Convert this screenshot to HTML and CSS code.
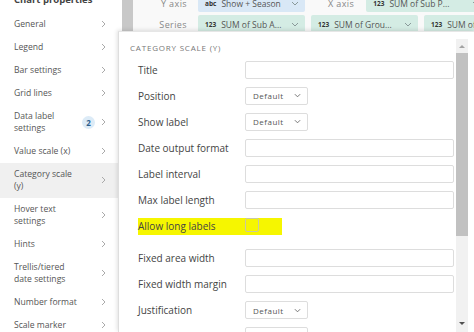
FILE: index.html
```html
<!DOCTYPE html>
<html lang="en">
<head>
    <meta charset="UTF-8">
    <meta name="viewport" content="width=device-width, initial-scale=1.0">
    <title>Chart properties</title>
    <link rel="stylesheet" href="styles.css">
</head>
<body>
    <div class="app">
        <aside class="sidebar">
            <div class="sidebar-title">Chart properties</div>
            <nav class="nav">
                <a class="nav-item"><span class="nav-label">General</span><span class="nav-end"><svg class="chev" viewBox="0 0 5 8"><polyline points="1,1 4,4 1,7"/></svg></span></a>
                <a class="nav-item"><span class="nav-label">Legend</span><span class="nav-end"><svg class="chev" viewBox="0 0 5 8"><polyline points="1,1 4,4 1,7"/></svg></span></a>
                <a class="nav-item"><span class="nav-label">Bar settings</span><span class="nav-end"><svg class="chev" viewBox="0 0 5 8"><polyline points="1,1 4,4 1,7"/></svg></span></a>
                <a class="nav-item"><span class="nav-label">Grid lines</span><span class="nav-end"><svg class="chev" viewBox="0 0 5 8"><polyline points="1,1 4,4 1,7"/></svg></span></a>
                <a class="nav-item"><span class="nav-label">Data label settings</span><span class="nav-end"><span class="badge">2</span><svg class="chev" viewBox="0 0 5 8"><polyline points="1,1 4,4 1,7"/></svg></span></a>
                <a class="nav-item"><span class="nav-label">Value scale (x)</span><span class="nav-end"><svg class="chev" viewBox="0 0 5 8"><polyline points="1,1 4,4 1,7"/></svg></span></a>
                <a class="nav-item active"><span class="nav-label">Category scale (y)</span><span class="nav-end"><svg class="chev" viewBox="0 0 5 8"><polyline points="1,1 4,4 1,7"/></svg></span></a>
                <a class="nav-item"><span class="nav-label">Hover text settings</span><span class="nav-end"><svg class="chev" viewBox="0 0 5 8"><polyline points="1,1 4,4 1,7"/></svg></span></a>
                <a class="nav-item"><span class="nav-label">Hints</span><span class="nav-end"><svg class="chev" viewBox="0 0 5 8"><polyline points="1,1 4,4 1,7"/></svg></span></a>
                <a class="nav-item"><span class="nav-label">Trellis/tiered date settings</span><span class="nav-end"><svg class="chev" viewBox="0 0 5 8"><polyline points="1,1 4,4 1,7"/></svg></span></a>
                <a class="nav-item"><span class="nav-label">Number format</span><span class="nav-end"><svg class="chev" viewBox="0 0 5 8"><polyline points="1,1 4,4 1,7"/></svg></span></a>
                <a class="nav-item"><span class="nav-label">Scale marker</span><span class="nav-end"><svg class="chev" viewBox="0 0 5 8"><polyline points="1,1 4,4 1,7"/></svg></span></a>
            </nav>
        </aside>

        <div class="gutter"></div>

        <main class="workspace">
            <div class="shelf">
                <div class="shelf-row">
                    <span class="shelf-label">Y axis</span>
                    <span class="chip chip-text"><span class="chip-type">abc</span>Show + Season<svg class="chip-chev" viewBox="0 0 8 5"><polyline points="1,1 4,4 7,1"/></svg></span>
                    <span class="shelf-label shelf-label-inline">X axis</span>
                    <span class="chip chip-wide"><span class="chip-type">123</span>SUM of Sub P...<svg class="chip-chev" viewBox="0 0 8 5"><polyline points="1,1 4,4 7,1"/></svg></span>
                </div>
                <div class="shelf-row">
                    <span class="shelf-label">Series</span>
                    <span class="chip"><span class="chip-type">123</span>SUM of Sub A...<svg class="chip-chev" viewBox="0 0 8 5"><polyline points="1,1 4,4 7,1"/></svg></span>
                    <span class="chip"><span class="chip-type">123</span>SUM of Grou...<svg class="chip-chev" viewBox="0 0 8 5"><polyline points="1,1 4,4 7,1"/></svg></span>
                    <span class="chip"><span class="chip-type">123</span>SUM of Sub T...<svg class="chip-chev" viewBox="0 0 8 5"><polyline points="1,1 4,4 7,1"/></svg></span>
                </div>
            </div>
        </main>
    </div>

    <section class="popup">
        <div class="popup-body">
            <h2 class="popup-title">Category scale (Y)</h2>
            <div class="form">
                <div class="form-row"><span class="form-label">Title</span><span class="form-input"></span></div>
                <div class="form-row"><span class="form-label">Position</span><span class="form-select">Default<svg class="select-chev" viewBox="0 0 8 5"><polyline points="1,1 4,4 7,1"/></svg></span></div>
                <div class="form-row"><span class="form-label">Show label</span><span class="form-select">Default<svg class="select-chev" viewBox="0 0 8 5"><polyline points="1,1 4,4 7,1"/></svg></span></div>
                <div class="form-row"><span class="form-label">Date output format</span><span class="form-input"></span></div>
                <div class="form-row"><span class="form-label">Label interval</span><span class="form-input"></span></div>
                <div class="form-row"><span class="form-label">Max label length</span><span class="form-input"></span></div>
                <div class="form-row form-row-marked"><span class="form-label">Allow long labels</span><span class="form-check"></span></div>
                <div class="form-row"><span class="form-label">Fixed area width</span><span class="form-input"></span></div>
                <div class="form-row"><span class="form-label">Fixed width margin</span><span class="form-input"></span></div>
                <div class="form-row"><span class="form-label">Justification</span><span class="form-select">Default<svg class="select-chev" viewBox="0 0 8 5"><polyline points="1,1 4,4 7,1"/></svg></span></div>
                <div class="form-row form-row-last"><span class="form-label"></span><span class="form-select"></span></div>
            </div>
        </div>
        <div class="scrollbar">
            <span class="scroll-up"></span>
            <span class="scroll-thumb"></span>
            <span class="scroll-track"></span>
            <span class="scroll-down"></span>
        </div>
    </section>
</body>
</html>
```

FILE: styles.css
```css
* {
    margin: 0;
    padding: 0;
    box-sizing: border-box;
}

body {
    font-family: 'Open Sans', 'DejaVu Sans', sans-serif;
    width: 474px;
    height: 332px;
    overflow: hidden;
    background: #fff;
    color: #555;
    position: relative;
}

.app {
    display: flex;
    height: 332px;
    overflow: hidden;
}

/* left menu */
.sidebar {
    width: 122px;
    flex-shrink: 0;
    background: #fff;
    overflow: hidden;
}

.sidebar-title {
    font-size: 9.5px;
    font-weight: 700;
    color: #444;
    line-height: 14px;
    height: 20px;
    margin-top: -7.5px;
    padding-left: 14px;
}

.nav-item {
    display: flex;
    justify-content: space-between;
    align-items: center;
    padding: 5.5px 16px 5.5px 14px;
    font-size: 8.6px;
    line-height: 12px;
    color: #555;
}

.nav-item.active {
    background: #f0f0f0;
}

.nav-label {
    width: 66px;
}

.nav-end {
    display: flex;
    align-items: center;
    gap: 6px;
}

.badge {
    width: 13px;
    height: 13px;
    border-radius: 50%;
    background: #dcebf7;
    color: #2b5d8c;
    font-size: 8px;
    font-weight: 700;
    line-height: 13px;
    text-align: center;
}

.chev {
    width: 5px;
    height: 8px;
    fill: none;
    stroke: #aaa;
    stroke-width: 1;
}

.gutter {
    width: 11px;
    flex-shrink: 0;
    background: #c8c8c8;
}

/* field shelves */
.workspace {
    flex: 1;
    background: #f9f9f9;
    overflow: hidden;
}

.shelf {
    margin-top: -6px;
}

.shelf-row {
    display: flex;
    align-items: center;
    height: 18px;
    margin-bottom: 3px;
    white-space: nowrap;
}

.shelf-label {
    width: 57px;
    flex-shrink: 0;
    padding-right: 3px;
    text-align: right;
    font-size: 9px;
    letter-spacing: 0.4px;
    color: #888;
    margin-right: 8px;
}

.shelf-label-inline {
    width: auto;
    margin: 0 12px 0 17px;
    padding: 0;
}

.chip {
    width: 107px;
    height: 18px;
    flex-shrink: 0;
    display: flex;
    align-items: center;
    padding: 0 6px 0 7px;
    margin-right: 6px;
    background: #d4ece4;
    border-radius: 2px;
    font-size: 8.5px;
    color: #555;
}

.chip-text {
    background: #d9e8f6;
}

.chip-wide {
    width: 120px;
}

.chip-type {
    font-size: 6.5px;
    font-weight: 700;
    color: #333;
    margin-right: 5px;
}

.chip-chev {
    width: 8px;
    height: 5px;
    margin-left: auto;
    fill: none;
    stroke: #8a9a9a;
    stroke-width: 1;
}

/* floating settings panel */
.popup {
    position: absolute;
    left: 118px;
    top: 31px;
    right: 0;
    bottom: 0;
    display: flex;
    overflow: hidden;
    background: #fff;
    border-left: 1px solid #dedede;
    border-top: 1px solid #e6e6e6;
    box-shadow: -1px -1px 4px rgba(0, 0, 0, 0.12);
}

.popup-body {
    flex: 1;
    padding: 11px 2px 0 11px;
    overflow: hidden;
}

.popup-title {
    font-size: 8px;
    font-weight: 400;
    letter-spacing: 0.8px;
    text-transform: uppercase;
    color: #777;
    line-height: 10px;
    margin-bottom: 3.5px;
}

.form {
    padding-left: 8px;
}

.form-row {
    display: flex;
    align-items: center;
    height: 26px;
}

.form-row-last {
    align-items: flex-start;
    padding-top: 4px;
}

.form-row-marked {
    margin-bottom: 6.5px;
    background: linear-gradient(#f6f600, #f6f600) no-repeat;
    background-size: 145px 17px;
    background-position: -1px 5px;
}

.form-label {
    width: 107px;
    flex-shrink: 0;
    font-size: 10px;
    color: #444;
}

.form-input {
    flex: 1;
    height: 18px;
    border: 1px solid #ddd;
    border-radius: 2px;
    background: #fff;
}

.form-select {
    width: 63px;
    height: 18px;
    display: flex;
    justify-content: space-between;
    align-items: center;
    padding: 0 6px 0 7px;
    border: 1px solid #ddd;
    border-radius: 2px;
    font-size: 8px;
    letter-spacing: 0.5px;
    color: #555;
}

.select-chev {
    width: 7px;
    height: 5px;
    fill: none;
    stroke: #666;
    stroke-width: 1;
}

.form-check {
    width: 14px;
    height: 14px;
    margin-top: -1px;
    border: 1px solid #c9c9a0;
    border-radius: 2px;
}

.scrollbar {
    width: 12px;
    margin: 7px 6px 0 0;
    display: flex;
    flex-direction: column;
    align-items: center;
    background: #f1f1f1;
}

.scroll-up,
.scroll-down {
    height: 14px;
    width: 100%;
    display: flex;
    justify-content: center;
    align-items: center;
}

.scroll-up::before {
    content: "";
    border-left: 3px solid transparent;
    border-right: 3px solid transparent;
    border-bottom: 3px solid #a3a3a3;
}

.scroll-down {
    margin-bottom: 2px;
}

.scroll-down::before {
    content: "";
    border-left: 3px solid transparent;
    border-right: 3px solid transparent;
    border-top: 3px solid #505050;
}

.scroll-thumb {
    width: 100%;
    height: 183px;
    background: #c1c1c1;
}

.scroll-track {
    flex: 1;
}
```
